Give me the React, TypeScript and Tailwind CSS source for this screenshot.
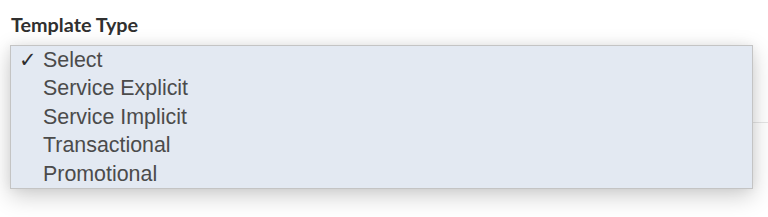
import React from 'react';

const options = ['Select', 'Service Explicit', 'Service Implicit', 'Transactional', 'Promotional'];

const App: React.FC = () => {
  return (
    <div className="h-[217px] w-[768px] overflow-hidden bg-white">
      <div className="pl-[11px] pt-[11px]">
        <label className="block font-['Lato',sans-serif] text-[19.8px] font-bold leading-[26px] text-[#303030]">
          Template Type
        </label>
      </div>

      <div className="relative mt-[8px]">
        {/* underlying field, covered by the open menu */}
        <div className="ml-[700px] h-[78px] border-b border-[#e6e6e6]" />

        <ul className="absolute left-[10px] top-0 w-[743px] border border-[#c4c4c4] bg-[#e3e9f2] font-['Liberation_Sans',Arial,sans-serif] text-[21.4px] leading-[28.4px] text-[#4b4b4b] shadow-[0_7px_22px_rgba(0,0,0,0.2),0_0_10px_rgba(0,0,0,0.06)]">
          {options.map((o, i) => (
            <li key={o} className="flex items-center">
              <span className="w-[32px] pl-[8px] font-['DejaVu_Sans',sans-serif] text-[21px] font-bold text-[#2e2e2e]">
                {i === 0 ? '✓' : ''}
              </span>
              <span>{o}</span>
            </li>
          ))}
        </ul>
      </div>
    </div>
  );
};

export default App;
